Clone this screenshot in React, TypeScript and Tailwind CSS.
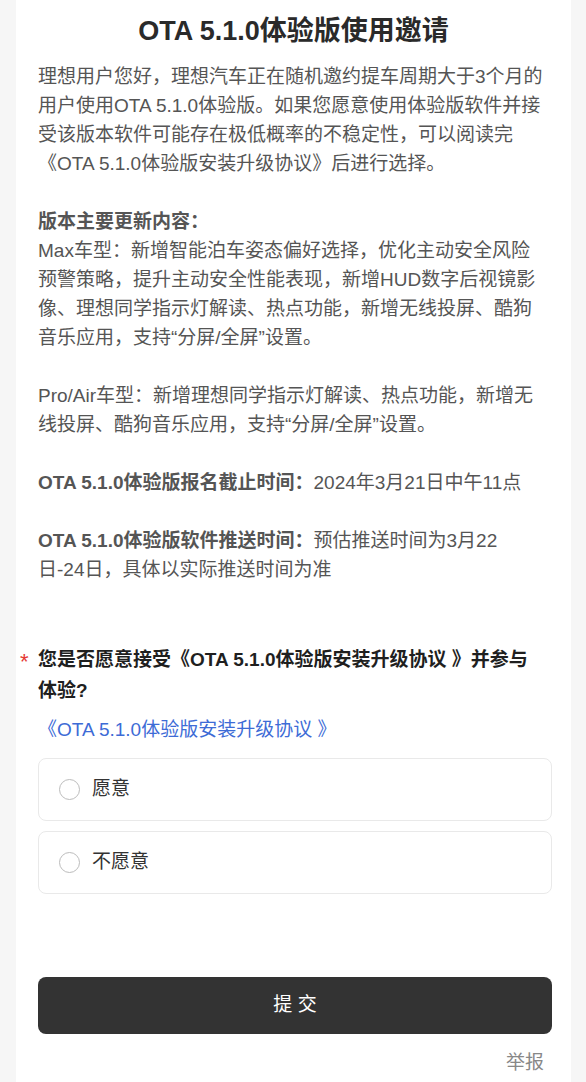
import { useState } from 'react'

const font = { fontFamily: '"Liberation Sans", "Noto Sans CJK SC", sans-serif' }

export default function App() {
  const [choice, setChoice] = useState<string | null>(null)

  const options = ['愿意', '不愿意']

  return (
    <div className="min-h-screen bg-[#f6f6f6] pl-[16px] pr-[15px]" style={font}>
      <div className="bg-white min-h-[1082px] pt-[13px] pl-[22px] pb-[12px]">
        {/* 标题 */}
        <h1 className="text-center text-[27px] leading-[36px] font-semibold text-[#2a2a2a] pr-[22px]">
          OTA 5.1.0体验版使用邀请
        </h1>

        {/* 正文 */}
        <div className="mt-[13px] w-[507px] text-[19px] leading-[29px] text-[#555]">
          <p>
            理想用户您好，理想汽车正在随机邀约提车周期大于3个月的用户使用OTA 5.1.0体验版。如果您愿意使用体验版软件并接受该版本软件可能存在极低概率的不稳定性，可以阅读完《OTA 5.1.0体验版安装升级协议》后进行选择。
          </p>
          <p className="mt-[29px] font-semibold">版本主要更新内容：</p>
          <p>
            Max车型：新增智能泊车姿态偏好选择，优化主动安全风险预警策略，提升主动安全性能表现，新增HUD数字后视镜影像、理想同学指示灯解读、热点功能，新增无线投屏、酷狗音乐应用，支持“分屏/全屏”设置。
          </p>
          <p className="mt-[29px]">
            Pro/Air车型：新增理想同学指示灯解读、热点功能，新增无线投屏、酷狗音乐应用，支持“分屏/全屏”设置。
          </p>
          <p className="mt-[29px]">
            <span className="font-semibold">OTA 5.1.0体验版报名截止时间：</span>2024年3月21日中午11点
          </p>
          <p className="mt-[29px]">
            <span className="font-semibold">OTA 5.1.0体验版软件推送时间：</span>预估推送时间为3月22
            <br />
            日-24日，具体以实际推送时间为准
          </p>
        </div>

        {/* 问题 */}
        <div className="mt-[60px] flex -ml-[18px]">
          <span className="w-[18px] text-[#e53935] text-[22px] leading-[30px] pt-[3px]">*</span>
          <p className="w-[507px] text-[19px] leading-[31px] font-semibold text-[#1f1f1f]">
            您是否愿意接受《OTA 5.1.0体验版安装升级协议 》并参与体验?
          </p>
        </div>
        <p className="mt-[9px] text-[19px] leading-[29px] text-[#3d6bd6]">《OTA 5.1.0体验版安装升级协议 》</p>

        <div className="mt-[14px] w-[514px] flex flex-col gap-[10px]">
          {options.map((o) => (
            <button
              key={o}
              onClick={() => setChoice(o)}
              className="h-[63px] flex items-center gap-[12px] pl-[20px] rounded-[8px] border border-[#e9e9e9] bg-white text-left"
            >
              <span
                className={
                  choice === o
                    ? 'w-[21px] h-[21px] rounded-full border-[6px] border-[#333]'
                    : 'w-[21px] h-[21px] rounded-full border border-[#bcbcbc]'
                }
              />
              <span className="text-[19px] text-[#333]">{o}</span>
            </button>
          ))}
        </div>

        <button className="mt-[83px] w-[514px] h-[57px] rounded-[8px] bg-[#333333] text-white text-[19px] flex items-center justify-center">
          提 交
        </button>

        <div className="mt-[14px] w-[506px] flex justify-end">
          <span className="text-[19px] leading-[29px] text-[#888]">举报</span>
        </div>
      </div>
    </div>
  )
}
